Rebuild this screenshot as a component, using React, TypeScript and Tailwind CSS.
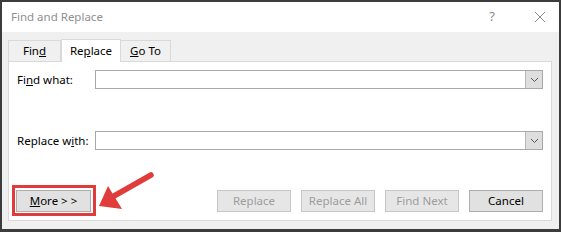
import React from "react";

const font = { fontFamily: '"Segoe UI", "Noto Sans", "Open Sans", sans-serif' };

function Chevron() {
  return (
    <svg width="9" height="6" viewBox="0 0 9 6">
      <path d="M1 1 L4.5 4.5 L8 1" fill="none" stroke="#555" strokeWidth="1" />
    </svg>
  );
}

function Combo() {
  return (
    <div className="flex-1 h-[19px] border border-[#a8a8a8] bg-white flex justify-end">
      <div className="w-[17px] h-full bg-[#dedede] border-l border-[#b8b8b8] flex items-center justify-center">
        <Chevron />
      </div>
    </div>
  );
}

function Btn({ children, disabled }: { children: React.ReactNode; disabled?: boolean }) {
  return (
    <div
      className={
        "w-[74px] h-[22px] flex items-center justify-center text-[11.5px] border " +
        (disabled
          ? "bg-[#e6e6e6] border-[#c6c6c6] text-[#9d9d9d]"
          : "bg-[#e1e1e1] border-[#adadad] text-black")
      }
    >
      {children}
    </div>
  );
}

export default function App() {
  return (
    <div
      className="w-[561px] h-[232px] border-2 border-[#3c3c3c] border-b-[3px] bg-[#f0f0f0] flex flex-col relative overflow-hidden"
      style={font}
    >
      <div className="h-[30px] bg-white flex items-center pl-[9px] pr-[12px] text-[11.5px] text-[#8f8f8f] shrink-0">
        <span>Find and Replace</span>
        <span className="ml-auto mr-[39px] text-[13px] text-[#8a8a8a]">?</span>
        <svg width="12" height="12" viewBox="0 0 12 12" className="mr-[1px]">
          <path d="M1 1 L11 11 M11 1 L1 11" stroke="#8a8a8a" strokeWidth="1" />
        </svg>
      </div>
      <div className="flex-1 flex flex-col pl-[6px] pr-[7px] pt-[6px] pb-[8px]">
        <div className="flex items-end h-[23px] text-[11.5px] text-black">
          <div className="w-[53px] h-[21px] border border-b-0 border-[#d9d9d9] flex items-center justify-center">
            <span>
              Fin<u>d</u>
            </span>
          </div>
          <div className="w-[60px] h-[23px] -mb-px bg-white border border-b-0 border-[#d9d9d9] flex items-center justify-center relative z-10">
            <span>
              Re<u>p</u>lace
            </span>
          </div>
          <div className="w-[50px] h-[21px] border border-b-0 border-l-0 border-[#d9d9d9] flex items-center justify-center">
            <span>
              <u>G</u>o To
            </span>
          </div>
        </div>
        <div className="flex-1 bg-white border border-[#d9d9d9] flex flex-col pt-[8px] pb-[8px] pl-[8px] pr-[8px] text-[11.5px] text-black">
          <div className="flex items-center h-[19px]">
            <div className="w-[78px]">
              Fi<u>n</u>d what:
            </div>
            <Combo />
          </div>
          <div className="flex items-center h-[19px] mt-[42px]">
            <div className="w-[78px]">
              Replace w<u>i</u>th:
            </div>
            <Combo />
          </div>
          <div className="flex items-center mt-[40px] h-[22px]">
            <div className="relative -ml-[1px]">
              <div className="w-[75px] h-[22px] flex items-center justify-center text-[11.5px] border bg-[#e1e1e1] border-[#adadad] text-black">
                <span>
                  <u>M</u>ore &gt; &gt;
                </span>
              </div>
              <div className="absolute -left-[4px] -top-[5px] -right-[5px] -bottom-[4px] border-[3px] border-[#e03c3c]" />
            </div>
            <div className="ml-auto flex gap-[10px]">
              <Btn disabled>Replace</Btn>
              <Btn disabled>Replace All</Btn>
              <Btn disabled>Find Next</Btn>
              <Btn>Cancel</Btn>
            </div>
          </div>
        </div>
      </div>
      <svg
        className="absolute left-0 top-0 pointer-events-none"
        width="561"
        height="232"
        viewBox="0 0 561 232"
      >
        <line x1="149" y1="173" x2="112" y2="194" stroke="#e03c3c" strokeWidth="5.5" strokeLinecap="round" />
        <polygon points="97,204 106,184 120,207" fill="#e03c3c" />
      </svg>
    </div>
  );
}
